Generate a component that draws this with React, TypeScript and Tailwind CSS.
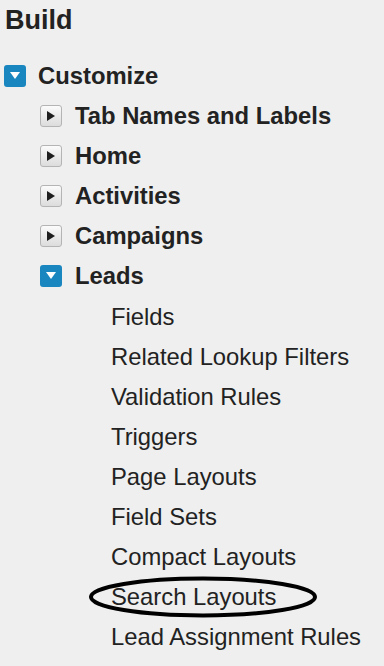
import React from "react";

const BlueIcon = () => (
  <div className="w-[22px] h-[22px] rounded-[3px] bg-[#1a86bf] flex items-center justify-center shrink-0">
    <svg width="10" height="8" viewBox="0 0 10 8">
      <polygon points="0,0 10,0 5,7" fill="#ffffff" />
    </svg>
  </div>
);

const GrayIcon = () => (
  <div className="w-[22px] h-[22px] rounded-[3px] border border-[#b4b4b4] bg-gradient-to-b from-[#fbfbfb] to-[#dcdcdc] flex items-center justify-center shrink-0">
    <svg width="8" height="10" viewBox="0 0 8 10">
      <polygon points="0,0 8,5 0,10" fill="#1e1e1e" />
    </svg>
  </div>
);

const collapsed = ["Tab Names and Labels", "Home", "Activities", "Campaigns"];
const leadsChildren = [
  "Fields",
  "Related Lookup Filters",
  "Validation Rules",
  "Triggers",
  "Page Layouts",
  "Field Sets",
  "Compact Layouts",
  "Search Layouts",
  "Lead Assignment Rules",
];

export default function App() {
  return (
    <div
      className="w-[384px] h-[666px] bg-[#efefef] text-[#222222] overflow-hidden relative"
      style={{ fontFamily: '"Liberation Sans", Arial, sans-serif' }}
    >
      <div className="h-[40px] flex items-center pl-[5px] text-[27px] font-bold">Build</div>
      <div className="mt-[16px]">
        <div className="h-[40px] flex items-center pl-[4px] gap-[12px]">
          <BlueIcon />
          <span className="text-[23.8px] font-bold">Customize</span>
        </div>
        <div className="pl-[40px]">
          {collapsed.map((t) => (
            <div key={t} className="h-[40px] flex items-center gap-[13px]">
              <GrayIcon />
              <span className="text-[23.8px] font-bold">{t}</span>
            </div>
          ))}
          <div className="h-[40px] flex items-center gap-[13px]">
            <BlueIcon />
            <span className="text-[23.8px] font-bold">Leads</span>
          </div>
          <div className="mt-[1px] pl-[71px]">
            {leadsChildren.map((t) => (
              <div key={t} className="h-[40px] flex items-center text-[23.8px]">
                {t}
              </div>
            ))}
          </div>
        </div>
      </div>
      <svg
        className="absolute left-0 top-0 pointer-events-none"
        width="384"
        height="666"
        viewBox="0 0 384 666"
      >
        <ellipse cx="203" cy="597" rx="112" ry="18.5" fill="none" stroke="#000" strokeWidth="4" />
      </svg>
    </div>
  );
}
